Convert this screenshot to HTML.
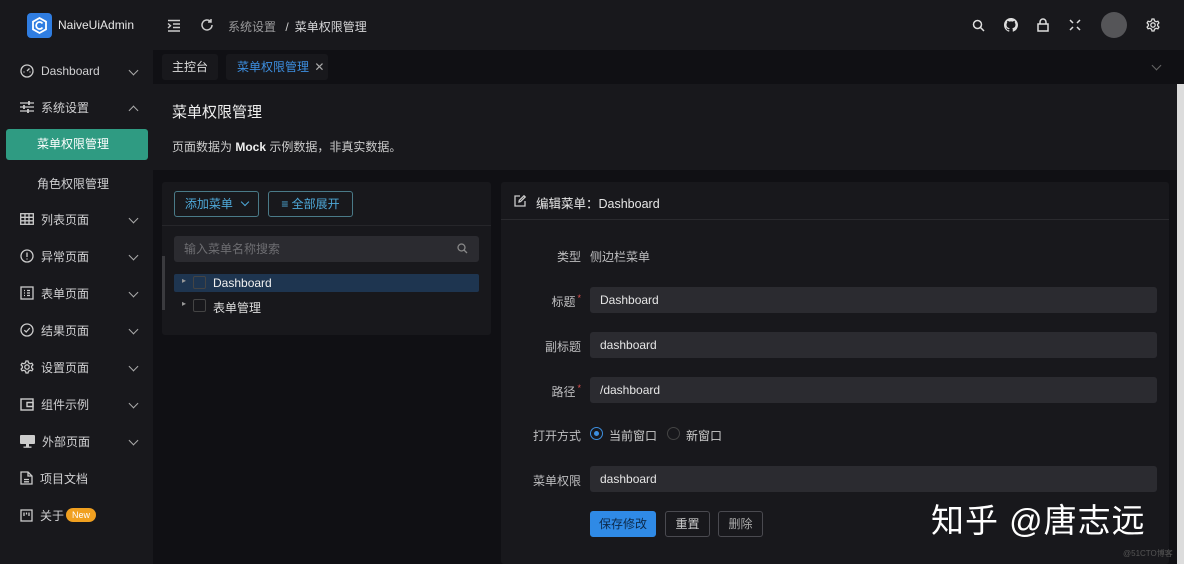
<!DOCTYPE html>
<html><head><meta charset="utf-8"><style>
*{box-sizing:border-box;margin:0;padding:0}
body{width:1184px;height:564px;overflow:hidden;background:#101014;font-family:"Liberation Sans","Noto Sans CJK SC",sans-serif;font-size:12px;color:#d6d6d8;position:relative}
.a{position:absolute}
.side{left:0;top:0;width:153px;height:564px;background:#18181c}
.hdr{left:153px;top:0;width:1031px;height:50px;background:#18181c}
.mi{position:absolute;left:0;width:153px;height:32px;display:flex;align-items:center;padding-left:20px;color:#d0d0d2;font-size:12px}
.mi svg{margin-right:7px}
.chev{position:absolute;right:16px;top:12px;width:7px;height:7px;border-right:1.5px solid #aaa;border-bottom:1.5px solid #aaa;transform:rotate(45deg)}
.inp{position:absolute;left:590px;width:567px;height:26px;background:#2b2b30;border-radius:3px;padding-left:10px;line-height:26px;color:#e6e6e6}
.lb{position:absolute;width:80px;left:501px;text-align:right;color:#bdbdbf}
.star{color:#e0504f;font-size:9px;vertical-align:top;margin-left:2px}
.btn{position:absolute;height:26px;border:1px solid #4a4a50;border-radius:3px;text-align:center;line-height:24px}
</style></head><body>
<div class="a" style="left:0;top:0;width:1184px;height:2px;background:#3a3a3e"></div>
<div class="a side"></div>
<div class="a hdr"></div>
<!-- logo -->
<div class="a" style="left:27px;top:13px;width:25px;height:25px;background:#2f7de1;border-radius:4px"></div>
<svg class="a" style="left:30px;top:16px" width="19" height="19" viewBox="0 0 19 19"><path d="M9.5 2 L16 5.7 V13.3 L9.5 17 L3 13.3 V5.7Z" fill="none" stroke="#fff" stroke-width="1.8"/><path d="M12.5 7.5 A3.5 3.5 0 1 0 12.5 11.5" fill="none" stroke="#fff" stroke-width="1.8"/></svg>
<div class="a" style="left:58px;top:18px;font-size:12px;color:#e8e8e8">NaiveUiAdmin</div>
<!-- header left -->
<svg class="a" style="left:167px;top:19px" width="14" height="13" viewBox="0 0 14 13" stroke="#ccc" stroke-width="1.4" fill="none"><path d="M1 1.5H13M6 5H13M6 8.5H13M1 12H13M1 4.5L3.5 6.7L1 9"/></svg>
<svg class="a" style="left:200px;top:18px" width="14" height="14" viewBox="0 0 14 14" fill="none" stroke="#ccc" stroke-width="1.5"><path d="M12 7A5 5 0 1 1 10.5 3.4"/><path d="M11 1V4H8"/></svg>
<div class="a" style="left:228px;top:18px;color:#9a9a9c">系统设置 <span style="margin:0 6px;color:#ccc">/</span><span style="color:#d6d6d8">菜单权限管理</span></div>
<!-- header right -->
<svg class="a" style="left:972px;top:19px" width="13" height="13" viewBox="0 0 13 13" fill="none" stroke="#ddd" stroke-width="1.5"><circle cx="5.5" cy="5.5" r="4"/><path d="M8.5 8.5L12 12"/></svg>
<svg class="a" style="left:1004px;top:18px" width="14" height="14" viewBox="0 0 16 16"><path fill="#ddd" d="M8 0C3.58 0 0 3.58 0 8c0 3.54 2.29 6.53 5.47 7.59.4.07.55-.17.55-.38v-1.33c-2.23.48-2.7-1.07-2.7-1.07-.36-.92-.89-1.17-.89-1.17-.73-.5.06-.49.06-.49.8.06 1.23.83 1.23.83.72 1.22 1.87.87 2.33.66.07-.52.28-.87.5-1.07-1.78-.2-3.64-.89-3.64-3.95 0-.87.31-1.59.82-2.15-.08-.2-.36-1.02.08-2.12 0 0 .67-.21 2.2.82a7.6 7.6 0 014 0c1.53-1.04 2.2-.82 2.2-.82.44 1.1.16 1.92.08 2.12.51.56.82 1.27.82 2.15 0 3.07-1.87 3.75-3.65 3.95.29.25.54.73.54 1.48v2.2c0 .21.15.46.55.38A8 8 0 0016 8c0-4.42-3.58-8-8-8z"/></svg>
<svg class="a" style="left:1037px;top:18px" width="12" height="14" viewBox="0 0 12 14" fill="none" stroke="#ddd" stroke-width="1.5"><rect x="1" y="6" width="10" height="7"/><path d="M3 6V4a3 3 0 016 0v2"/></svg>
<svg class="a" style="left:1069px;top:19px" width="12" height="12" viewBox="0 0 12 12" fill="none" stroke="#ddd" stroke-width="1.5"><path d="M1 1L4 4M11 1L8 4M1 11L4 8M11 11L8 8"/></svg>
<div class="a" style="left:1101px;top:12px;width:26px;height:26px;border-radius:50%;background:#555558"></div>
<svg class="a" style="left:1146px;top:18px" width="14" height="14" viewBox="0 0 14 14" fill="none" stroke="#ddd" stroke-width="1.3"><circle cx="7" cy="7" r="2.2"/><path d="M6 1h2l.5 1.8 1.6.9 1.8-.5 1 1.7-1.3 1.4v1.4l1.3 1.4-1 1.7-1.8-.5-1.6.9L8 13H6l-.5-1.8-1.6-.9-1.8.5-1-1.7 1.3-1.4V6.3L1.1 4.9l1-1.7 1.8.5 1.6-.9z"/></svg>
<!-- sidebar -->
<div class="mi" style="top:55px"><svg width="14" height="14" viewBox="0 0 14 14" fill="none" stroke="#ccc" stroke-width="1.3"><circle cx="7" cy="7" r="6"/><path d="M7 7L9.5 4.5M3.5 8h1M9.5 8h1"/></svg><span>Dashboard</span><div class="chev"></div></div>
<div class="mi" style="top:91px"><svg width="14" height="12" viewBox="0 0 14 12" stroke="#ccc" stroke-width="1.3"><path d="M0 2H14M0 6H14M0 10H14"/><path d="M9 0V4M4 4V8M8 8V12" stroke-width="1.8"/></svg><span>系统设置</span><div class="chev" style="transform:rotate(225deg);top:16px"></div></div>
<div class="a" style="left:6px;top:129px;width:142px;height:31px;background:#2f9b82;border-radius:3px;color:#fff;line-height:31px;padding-left:31px">菜单权限管理</div>
<div class="a" style="left:37px;top:175px;color:#d0d0d2">角色权限管理</div>
<div class="mi" style="top:203px"><svg width="14" height="12" viewBox="0 0 14 12" fill="none" stroke="#ccc" stroke-width="1.3"><rect x=".7" y=".7" width="12.6" height="10.6"/><path d="M.7 4.3H13.3M.7 7.8H13.3M5 .7V11.3M9 .7V11.3"/></svg><span>列表页面</span><div class="chev"></div></div>
<div class="mi" style="top:240px"><svg width="14" height="14" viewBox="0 0 14 14" fill="none" stroke="#ccc" stroke-width="1.3"><circle cx="7" cy="7" r="6"/><path d="M7 3.5V8M7 9.5V10.5"/></svg><span>异常页面</span><div class="chev"></div></div>
<div class="mi" style="top:277px"><svg width="14" height="14" viewBox="0 0 14 14" fill="none" stroke="#ccc" stroke-width="1.3"><rect x="1" y="1" width="12" height="12"/><path d="M4 4.5h1M4 7h1M4 9.5h1M7 4.5h3M7 7h3M7 9.5h3"/></svg><span>表单页面</span><div class="chev"></div></div>
<div class="mi" style="top:314px"><svg width="14" height="14" viewBox="0 0 14 14" fill="none" stroke="#ccc" stroke-width="1.3"><circle cx="7" cy="7" r="6"/><path d="M4.3 7.2L6.2 9L9.8 5"/></svg><span>结果页面</span><div class="chev"></div></div>
<div class="mi" style="top:351px"><svg width="14" height="14" viewBox="0 0 14 14" fill="none" stroke="#ccc" stroke-width="1.3"><circle cx="7" cy="7" r="2.2"/><path d="M6 1h2l.5 1.8 1.6.9 1.8-.5 1 1.7-1.3 1.4v1.4l1.3 1.4-1 1.7-1.8-.5-1.6.9L8 13H6l-.5-1.8-1.6-.9-1.8.5-1-1.7 1.3-1.4V6.3L1.1 4.9l1-1.7 1.8.5 1.6-.9z"/></svg><span>设置页面</span><div class="chev"></div></div>
<div class="mi" style="top:388px"><svg width="14" height="13" viewBox="0 0 14 13" fill="none" stroke="#ccc" stroke-width="1.4"><rect x="1" y="1" width="12" height="11"/><path d="M7 4.5H13V8.5H7Z"/></svg><span>组件示例</span><div class="chev"></div></div>
<div class="mi" style="top:425px"><svg width="15" height="13" viewBox="0 0 15 13" fill="#ccc"><rect x="0" y="0" width="15" height="9" rx="1"/><rect x="6" y="9" width="3" height="2.5"/><rect x="3.5" y="11.5" width="8" height="1.3"/></svg><span>外部页面</span><div class="chev"></div></div>
<div class="mi" style="top:462px"><svg width="13" height="14" viewBox="0 0 13 14" fill="none" stroke="#ccc" stroke-width="1.3"><path d="M1 1H8L12 5V13H1Z"/><path d="M8 1V5H12M4 8.5H9M4 10.8H9"/></svg><span>项目文档</span></div>
<div class="mi" style="top:499px"><svg width="13" height="13" viewBox="0 0 13 13" fill="none" stroke="#ccc" stroke-width="1.3"><rect x="1" y="1" width="11" height="11"/><path d="M4 3.5V7M6.5 3.5V5.5M9 3.5V7"/></svg><span>关于</span><span style="margin-left:2px;background:#f0a020;color:#fff;border-radius:9px;font-size:9px;padding:2px 6px">New</span></div>
<!-- tabs -->
<div class="a" style="left:153px;top:50px;width:1024px;height:34px;background:#101014"></div>
<div class="a" style="left:162px;top:54px;width:56px;height:26px;background:#18181c;border-radius:3px;text-align:center;line-height:26px;color:#ddd">主控台</div>
<div class="a" style="left:226px;top:54px;width:102px;height:26px;background:#18181c;border-radius:3px;line-height:26px;padding-left:11px;color:#3d8fe0">菜单权限管理 <span style="color:#aaa;margin-left:2px">✕</span></div>
<div class="a" style="left:1153px;top:62px;width:7px;height:7px;border-right:1.3px solid #666;border-bottom:1.3px solid #666;transform:rotate(45deg)"></div>
<!-- page header -->
<div class="a" style="left:153px;top:84px;width:1024px;height:86px;background:#18181c"></div>
<div class="a" style="left:172px;top:101px;font-size:15px;color:#eee">菜单权限管理</div>
<div class="a" style="left:172px;top:138px;color:#ccc">页面数据为 <b style="color:#eee">Mock</b> 示例数据，非真实数据。</div>
<!-- scroll strip -->
<div class="a" style="left:1177px;top:84px;width:7px;height:480px;background:#dcdcdc"></div>
<!-- left card -->
<div class="a" style="left:162px;top:182px;width:329px;height:153px;background:#18181c;border-radius:3px"></div>
<div class="a" style="left:162px;top:225px;width:329px;height:1px;background:#26262a"></div>
<div class="btn" style="left:174px;top:191px;width:85px;border-color:#4a7a88;color:#4ea8d8;line-height:24px">添加菜单 <span style="display:inline-block;width:6px;height:6px;border-right:1.2px solid #4ea8d8;border-bottom:1.2px solid #4ea8d8;transform:rotate(45deg);margin:0 0 3px 6px"></span></div>
<div class="btn" style="left:268px;top:191px;width:85px;border-color:#4a7a88;color:#4ea8d8">≡ 全部展开</div>
<div class="a" style="left:174px;top:236px;width:305px;height:26px;background:#2b2b30;border-radius:3px;padding-left:10px;line-height:26px;color:#6e6e72">输入菜单名称搜索</div>
<svg class="a" style="left:457px;top:243px" width="11" height="11" viewBox="0 0 11 11" fill="none" stroke="#888" stroke-width="1.3"><circle cx="4.5" cy="4.5" r="3.5"/><path d="M7 7L10 10"/></svg>
<div class="a" style="left:162px;top:256px;width:3px;height:54px;background:#3a3a3e"></div>
<div class="a" style="left:174px;top:274px;width:305px;height:18px;background:#1e3550;border-radius:2px"></div>
<div class="a" style="left:182px;top:276px;font-size:8px;color:#999">▸</div>
<div class="a" style="left:193px;top:276px;width:13px;height:13px;border:1px solid #444;border-radius:2px"></div>
<div class="a" style="left:213px;top:276px;color:#f0f0f0">Dashboard</div>
<div class="a" style="left:182px;top:299px;font-size:8px;color:#999">▸</div>
<div class="a" style="left:193px;top:299px;width:13px;height:13px;border:1px solid #444;border-radius:2px"></div>
<div class="a" style="left:213px;top:299px;color:#ddd">表单管理</div>
<!-- right card -->
<div class="a" style="left:501px;top:182px;width:668px;height:382px;background:#18181c;border-radius:3px"></div>
<div class="a" style="left:501px;top:219px;width:668px;height:1px;background:#2a2a2e"></div>
<svg class="a" style="left:514px;top:195px" width="12" height="12" viewBox="0 0 12 12" fill="none" stroke="#ccc" stroke-width="1.3"><path d="M6 1H1V11H11V6"/><path d="M5 7L5.3 5.3L10 0.8L11.2 2L6.6 6.6Z"/></svg>
<div class="a" style="left:536px;top:193px;font-size:12.5px;color:#e6e6e6">编辑菜单：Dashboard</div>
<div class="lb" style="top:248px">类型</div>
<div class="a" style="left:590px;top:248px;color:#bdbdbf">侧边栏菜单</div>
<div class="lb" style="top:293px">标题<span class="star">*</span></div>
<div class="inp" style="top:287px">Dashboard</div>
<div class="lb" style="top:338px">副标题</div>
<div class="inp" style="top:332px">dashboard</div>
<div class="lb" style="top:383px">路径<span class="star">*</span></div>
<div class="inp" style="top:377px">/dashboard</div>
<div class="lb" style="top:427px">打开方式</div>
<div class="a" style="left:590px;top:427px;width:13px;height:13px;border:1px solid #3d8fe0;border-radius:50%"></div>
<div class="a" style="left:594px;top:431px;width:5px;height:5px;background:#3d8fe0;border-radius:50%"></div>
<div class="a" style="left:609px;top:427px;color:#ccc">当前窗口</div>
<div class="a" style="left:667px;top:427px;width:13px;height:13px;border:1px solid #444;border-radius:50%"></div>
<div class="a" style="left:686px;top:427px;color:#ccc">新窗口</div>
<div class="lb" style="top:472px">菜单权限</div>
<div class="inp" style="top:466px">dashboard</div>
<div class="btn" style="left:590px;top:511px;width:66px;background:#2f8ae6;border-color:#2f8ae6;color:#0d2a4a">保存修改</div>
<div class="btn" style="left:665px;top:511px;width:45px;color:#ccc">重置</div>
<div class="btn" style="left:718px;top:511px;width:45px;color:#aaa">删除</div>
<div class="a" style="left:931px;top:494px;font-size:33px;color:#fff;letter-spacing:1px">知乎 @唐志远</div>
<div class="a" style="left:1123px;top:548px;font-size:8px;color:#555">@51CTO博客</div>
</body></html>
